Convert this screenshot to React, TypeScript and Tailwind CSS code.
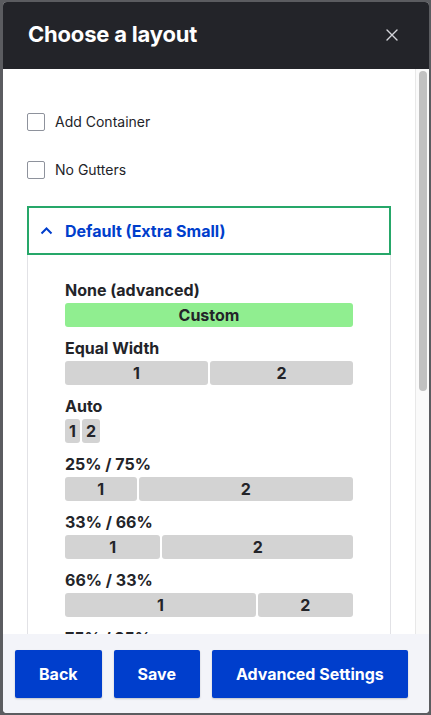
import type { ReactNode } from 'react';

type Layout = { label: string; cells: { text: string; grow: string }[]; auto?: boolean; green?: boolean };

// the last option is cut off by the footer, only its label peeks out
const LAYOUTS: Layout[] = [
  { label: 'None (advanced)', cells: [{ text: 'Custom', grow: 'flex-1' }], green: true },
  { label: 'Equal Width', cells: [{ text: '1', grow: 'flex-1' }, { text: '2', grow: 'flex-1' }] },
  { label: 'Auto', cells: [{ text: '1', grow: '' }, { text: '2', grow: '' }], auto: true },
  { label: '25% / 75%', cells: [{ text: '1', grow: 'flex-[1]' }, { text: '2', grow: 'flex-[3]' }] },
  { label: '33% / 66%', cells: [{ text: '1', grow: 'flex-[1]' }, { text: '2', grow: 'flex-[2]' }] },
  { label: '66% / 33%', cells: [{ text: '1', grow: 'flex-[2]' }, { text: '2', grow: 'flex-[1]' }] },
  { label: '75% / 25%', cells: [] },
];

function Checkbox({ label }: { label: string }) {
  return (
    <label className="flex h-[18px] items-center gap-[10px]">
      <span className="h-[18px] w-[18px] rounded-[2px] border border-[#8e929c] bg-white" />
      <span className="text-[14px] leading-[18px] text-[#232429]">{label}</span>
    </label>
  );
}

function Button({ children }: { children: ReactNode }) {
  return (
    <button className="h-[48px] rounded-[2px] bg-[#003ecc] px-[24px] text-[16px] font-bold text-white shadow-[0_1px_2px_rgba(0,0,0,0.2)]">
      {children}
    </button>
  );
}

export default function App() {
  return (
    <div
      className="h-[715px] w-[431px] bg-[#5b5c60] pb-[2px] pl-[3px] pr-[2px] pt-[2px]"
      style={{ fontFamily: 'Inter, "Noto Sans", sans-serif' }}
    >
      <div className="flex h-full flex-col overflow-hidden rounded-[4px] bg-white">
        <div className="flex h-[67px] shrink-0 items-center justify-between bg-[#232429] pb-[2px] pl-[25px] pr-[31px]">
          <h1 className="text-[22px] font-bold tracking-[-0.2px] text-white">Choose a layout</h1>
          <svg width="12" height="12" viewBox="0 0 12 12" className="text-[#d4d5da]">
            <path d="M1 1 L11 11 M11 1 L1 11" stroke="currentColor" strokeWidth="1.4" strokeLinecap="round" />
          </svg>
        </div>

        <div className="flex min-h-0 flex-1">
          <div className="min-w-0 flex-1 overflow-hidden px-[24px] pt-[44px]">
            <div className="flex flex-col gap-[30px]">
              <Checkbox label="Add Container" />
              <Checkbox label="No Gutters" />
            </div>

            <div className="mt-[27px]">
              <div className="flex h-[49px] items-center gap-[12px] border-2 border-[#26a769] pl-[11px]">
                <svg width="13" height="9" viewBox="0 0 13 9" className="text-[#003ecc]">
                  <path d="M1.5 7.5 L6.5 2.5 L11.5 7.5" fill="none" stroke="currentColor" strokeWidth="2" />
                </svg>
                <span className="text-[16px] font-bold text-[#003ecc]">Default (Extra Small)</span>
              </div>
              <div className="border-x border-[#e2e2e6] px-[37px] pt-[25px] pb-[40px]">
                {LAYOUTS.map((l) => (
                  <div key={l.label} className="mb-[11px]">
                    <div className="text-[16px] font-bold leading-[20px] text-[#232429]">{l.label}</div>
                    {l.cells.length > 0 && (
                      <div className="mt-[3px] flex gap-[2px]">
                        {l.cells.map((c, i) => (
                          <div
                            key={i}
                            className={`${c.grow} ${l.green ? 'bg-[#90ee90]' : 'bg-[#d3d3d3]'} ${l.auto ? 'px-[4px]' : ''} flex h-[24px] items-center justify-center rounded-[3px] text-[16px] font-bold text-[#232429]`}
                          >
                            {c.text}
                          </div>
                        ))}
                      </div>
                    )}
                  </div>
                ))}
              </div>
            </div>
          </div>

          <div className="w-[14px] shrink-0 border-l border-[#e8e8e8] bg-[#fafafa] pt-[2px]">
            <div className="mx-auto h-[320px] w-[8px] rounded-full bg-[#c1c1c1]" />
          </div>
        </div>

        <div className="flex h-[79px] shrink-0 items-center gap-[12px] bg-[#f3f4f9] px-[12px]">
          <Button>Back</Button>
          <Button>Save</Button>
          <Button>Advanced Settings</Button>
        </div>
      </div>
    </div>
  );
}
